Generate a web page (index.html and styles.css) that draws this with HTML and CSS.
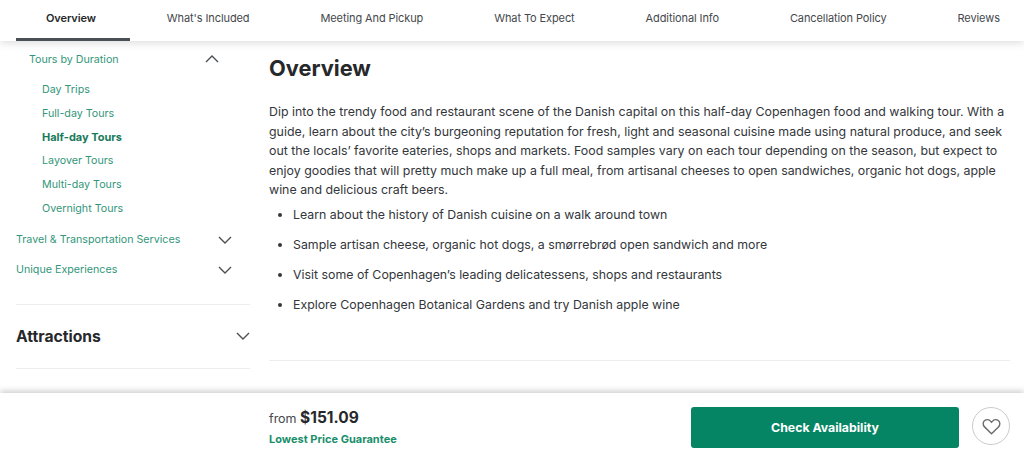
FILE: index.html
```html
<!DOCTYPE html>
<html lang="en">
<head>
<meta charset="utf-8">
<title>Overview</title>
<link rel="stylesheet" href="styles.css">
</head>
<body>
<div class="page">
  <nav class="tabs">
    <a class="tab active">Overview</a>
    <a class="tab">What's Included</a>
    <a class="tab">Meeting And Pickup</a>
    <a class="tab">What To Expect</a>
    <a class="tab">Additional Info</a>
    <a class="tab">Cancellation Policy</a>
    <a class="tab">Reviews</a>
  </nav>
  <div class="content">
    <aside class="side">
      <div class="cat first"><span>Tours by Duration</span>
        <svg class="chev" width="14" height="8" viewBox="0 0 14 8"><path d="M1 7l6-6 6 6"/></svg>
      </div>
      <ul class="sub">
        <li>Day Trips</li>
        <li>Full-day Tours</li>
        <li class="current">Half-day Tours</li>
        <li>Layover Tours</li>
        <li>Multi-day Tours</li>
        <li>Overnight Tours</li>
      </ul>
      <div class="cat"><span>Travel &amp; Transportation Services</span>
        <svg class="chev" width="14" height="8" viewBox="0 0 14 8"><path d="M1 1l6 6 6-6"/></svg>
      </div>
      <div class="cat"><span>Unique Experiences</span>
        <svg class="chev" width="14" height="8" viewBox="0 0 14 8"><path d="M1 1l6 6 6-6"/></svg>
      </div>
      <div class="attr">
        <h3>Attractions</h3>
        <svg class="chev" width="14" height="8" viewBox="0 0 14 8"><path d="M1 1l6 6 6-6"/></svg>
      </div>
    </aside>
    <main class="main">
      <h2>Overview</h2>
      <p>Dip into the trendy food and restaurant scene of the Danish capital on this half-day Copenhagen food and walking tour. With a guide, learn about the city’s burgeoning reputation for fresh, light and seasonal cuisine made using natural produce, and seek out the locals’ favorite eateries, shops and markets. Food samples vary on each tour depending on the season, but expect to enjoy goodies that will pretty much make up a full meal, from artisanal cheeses to open sandwiches, organic hot dogs, apple wine and delicious craft beers.</p>
      <ul class="points">
        <li>Learn about the history of Danish cuisine on a walk around town</li>
        <li>Sample artisan cheese, organic hot dogs, a smørrebrød open sandwich and more</li>
        <li>Visit some of Copenhagen’s leading delicatessens, shops and restaurants</li>
        <li>Explore Copenhagen Botanical Gardens and try Danish apple wine</li>
      </ul>
      <hr class="rule">
    </main>
  </div>
  <footer class="bar">
    <div class="price">
      <div class="amount"><span class="from">from</span> <b>$151.09</b></div>
      <div class="guarantee">Lowest Price Guarantee</div>
    </div>
    <button class="cta">Check Availability</button>
    <button class="fav" aria-label="Save">
      <svg width="19" height="17" viewBox="0 0 20 18"><path d="M10 16.6L2.6 9.4C.6 7.4.8 4.3 2.8 2.7c1.9-1.5 4.6-1.2 6.1.6l1.1 1.2 1.1-1.2c1.5-1.8 4.2-2.1 6.1-.6 2 1.6 2.2 4.7.2 6.7z"/></svg>
    </button>
  </footer>
</div>
</body>
</html>
```
FILE: styles.css
```css
* { box-sizing: border-box; }
html, body { margin: 0; padding: 0; }
body {
  font-family: Inter, "Liberation Sans", sans-serif;
  color: #26282b;
  background: #fff;
  overflow: hidden;
}
.page {
  height: 459px;
  display: flex;
  flex-direction: column;
  overflow: hidden;
}
.tabs {
  height: 41px;
  flex: none;
  display: flex;
  padding-left: 16px;
  background: #fff;
  box-shadow: 0 2px 8px rgba(0,0,0,.14);
  position: relative;
  z-index: 2;
  font-size: 11px;
  color: #45484c;
}
.tab {
  padding: 0 35.5px;
  height: 41px;
  line-height: 37px;
  white-space: nowrap;
  letter-spacing: -0.1px;
}
.tab.active {
  padding: 0 34.5px 0 30px;
  margin-right: 1px;
  font-weight: 600;
  color: #26282b;
  border-bottom: 3px solid #4a4f54;
}
.content {
  flex: 1;
  min-height: 0;
  display: flex;
  overflow: hidden;
}
.side {
  width: 234px;
  flex: none;
  margin-left: 16px;
  font-size: 10.7px;
  color: #33967a;
}
.cat {
  display: flex;
  justify-content: space-between;
  align-items: center;
  height: 30px;
  padding-right: 18px;
}
.cat.first {
  margin-top: 3px;
  padding-left: 13px;
  padding-right: 31px;
}
.chev { fill: none; stroke: #4b4f54; stroke-width: 1.4; flex: none; }
.sub {
  list-style: none;
  margin: 0;
  padding: 4px 0 0 26px;
}
.sub li { height: 23.8px; line-height: 23.8px; }
.sub .current { font-size: 11px; font-weight: 700; color: #187a5c; }
.sub + .cat { margin-top: 4px; }
.attr {
  margin-top: 19px;
  height: 65px;
  border-top: 1px solid #ebedee;
  border-bottom: 1px solid #ebedee;
  display: flex;
  align-items: center;
  justify-content: space-between;
}
.attr h3 { margin: 0; font-size: 15.7px; font-weight: 700; color: #26282b; }
.main {
  margin-left: 19px;
  width: 741px;
  flex: none;
}
.main h2 {
  margin: 14px 0 0;
  font-size: 21.8px;
  line-height: 27px;
  font-weight: 700;
  color: #26282b;
}
.main p {
  margin: 20px 0 0;
  font-size: 12.38px;
  line-height: 19.6px;
  color: #33363a;
}
.points {
  margin: 0.5px 0 0;
  padding: 0 0 0 24px;
  font-size: 12.35px;
  color: #33363a;
}
.points li { height: 30px; line-height: 30px; }
.rule {
  margin: 40px 0 0;
  border: 0;
  border-top: 1px solid #ebedee;
}
.bar {
  height: 66px;
  flex: none;
  display: flex;
  align-items: flex-start;
  padding-left: 269px;
  background: #fff;
  box-shadow: 0 -2px 6px rgba(0,0,0,.2);
  position: relative;
  z-index: 2;
}
.price { width: 422px; padding-top: 15px; }
.amount { font-size: 12.5px; color: #45484c; line-height: 20px; }
.amount b { font-size: 15.5px; font-weight: 700; color: #26282b; }
.guarantee { margin-top: 3px; font-size: 11px; font-weight: 700; color: #1a8f6c; line-height: 14px; }
.cta {
  width: 268px;
  height: 41px;
  margin-top: 14px;
  border: 0;
  border-radius: 3px;
  background: #058563;
  color: #fff;
  font: 700 12.3px Inter, "Liberation Sans", sans-serif;
}
.fav {
  margin: 14px 0 0 13px;
  width: 38px;
  height: 38px;
  border-radius: 50%;
  background: #fff;
  border: 1px solid #c9cbcd;
  padding: 0;
  display: flex;
  align-items: center;
  justify-content: center;
}
.fav svg { fill: none; stroke: #6a6d70; stroke-width: 1.5; }
```
